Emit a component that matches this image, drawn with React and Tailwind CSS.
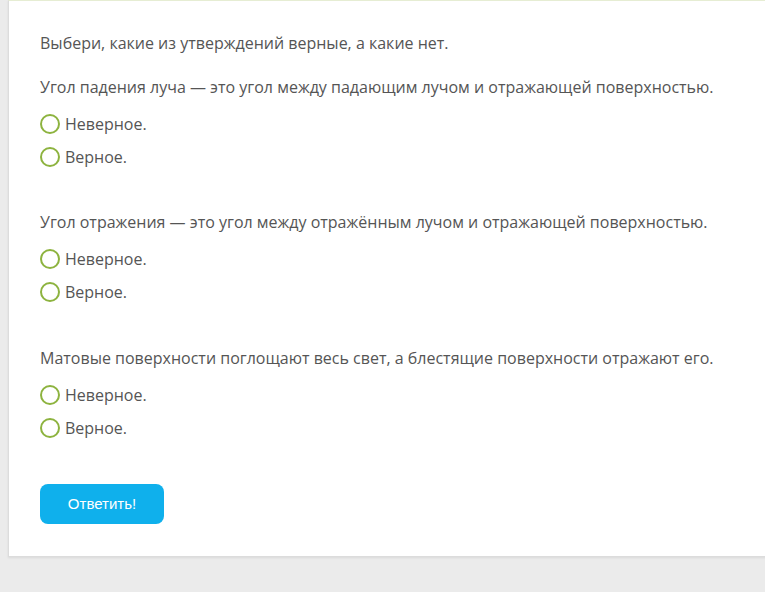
import React from "react";

const questions = [
  "Угол падения луча — это угол между падающим лучом и отражающей поверхностью.",
  "Угол отражения — это угол между отражённым лучом и отражающей поверхностью.",
  "Матовые поверхности поглощают весь свет, а блестящие поверхности отражают его.",
];

const gaps = ["mt-[22px]", "mt-[38px]", "mt-[39px]"];

function Option({ label }) {
  return (
    <div className="flex items-center h-[33px]">
      <span className="w-[20px] h-[20px] rounded-full border-2 border-[#8db33f] box-border"></span>
      <span className="ml-[5px]">{label}</span>
    </div>
  );
}

export default function App() {
  return (
    <div className="w-[765px] h-[592px] bg-[#ebebeb] overflow-hidden" style={{ fontFamily: '"Open Sans", sans-serif' }}>
      <div className="ml-[8px] w-[765px] h-[557px] bg-white border-l border-b border-[#dcdcdc] border-t border-t-[#e6edd3] shadow-[0_1px_2px_rgba(0,0,0,0.08)] pl-[31px] pt-[31px] text-[16px] text-[#555] leading-[22px]">
        <div>Выбери, какие из утверждений верные, а какие нет.</div>
        {questions.map((q, i) => (
          <div key={i} className={gaps[i]}>
            <div className="mb-[9px]">{q}</div>
            <Option label="Неверное." />
            <Option label="Верное." />
          </div>
        ))}
        <button className="mt-[40px] w-[124px] h-[40px] rounded-[8px] bg-[#0fb0ec] text-white text-[15px]" style={{ fontFamily: '"Liberation Sans", Arial, sans-serif' }}>
          Ответить!
        </button>
      </div>
    </div>
  );
}
